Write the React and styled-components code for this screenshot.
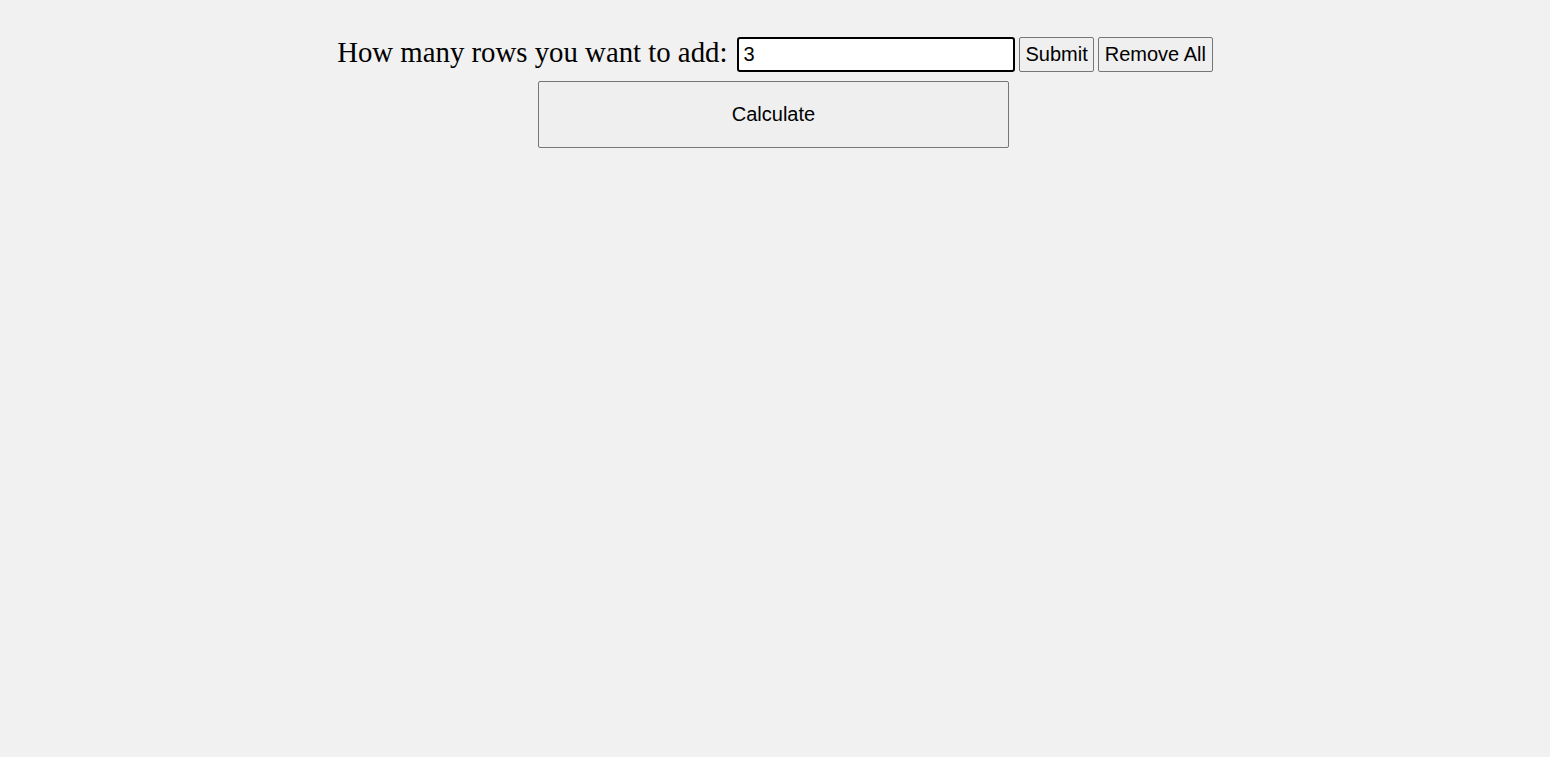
import React, { useState } from "react";
import styled, { createGlobalStyle } from "styled-components";

const GlobalStyle = createGlobalStyle`
  html, body {
    margin: 0;
    padding: 0;
    background: #f1f1f1;
  }
  body {
    min-height: 757px;
  }
`;

const StyledPage = styled.div`
  display: flex;
  flex-direction: column;
  align-items: center;
  padding-top: 37px;
`;

const StyledRow = styled.form`
  display: flex;
  align-items: center;
`;

const StyledLabel = styled.label`
  font-family: "Liberation Serif", "Times New Roman", serif;
  font-size: 28.8px;
  color: #000;
  margin-right: 10px;
  line-height: 35px;
  position: relative;
  top: -2px;
`;

const StyledInput = styled.input`
  box-sizing: border-box;
  width: 278px;
  height: 35px;
  padding: 0 4px;
  font-family: "Liberation Sans", Arial, sans-serif;
  font-size: 20px;
  color: #000;
  background: #fff;
  border: 2px solid #000;
  border-radius: 3px;
  outline: none;
  margin-right: 4px;
`;

const StyledButton = styled.button`
  box-sizing: border-box;
  height: ${(p) => (p.$big ? "67px" : "35px")};
  width: ${(p) => (p.$big ? "471px" : "auto")};
  padding: 0 ${(p) => p.$pad || "6px"};
  margin-right: ${(p) => (p.$gap ? "4px" : "0")};
  font-family: "Liberation Sans", Arial, sans-serif;
  font-size: 20px;
  color: #000;
  background: #efefef;
  border: 1px solid #767676;
  border-radius: 2px;
  cursor: pointer;
`;

const StyledCalcWrap = styled.div`
  margin-top: 9px;
  margin-left: -3px;
`;

export default function App() {
  const [rows, setRows] = useState("3");
  return (
    <>
      <GlobalStyle />
      <StyledPage>
        <StyledRow onSubmit={(e) => e.preventDefault()}>
          <StyledLabel htmlFor="rows">How many rows you want to add:</StyledLabel>
          <StyledInput
            id="rows"
            value={rows}
            onChange={(e) => setRows(e.target.value)}
          />
          <StyledButton type="submit" $gap $pad="5px">
            Submit
          </StyledButton>
          <StyledButton type="button" onClick={() => setRows("")}>
            Remove All
          </StyledButton>
        </StyledRow>
        <StyledCalcWrap>
          <StyledButton type="button" $big>
            Calculate
          </StyledButton>
        </StyledCalcWrap>
      </StyledPage>
    </>
  );
}
